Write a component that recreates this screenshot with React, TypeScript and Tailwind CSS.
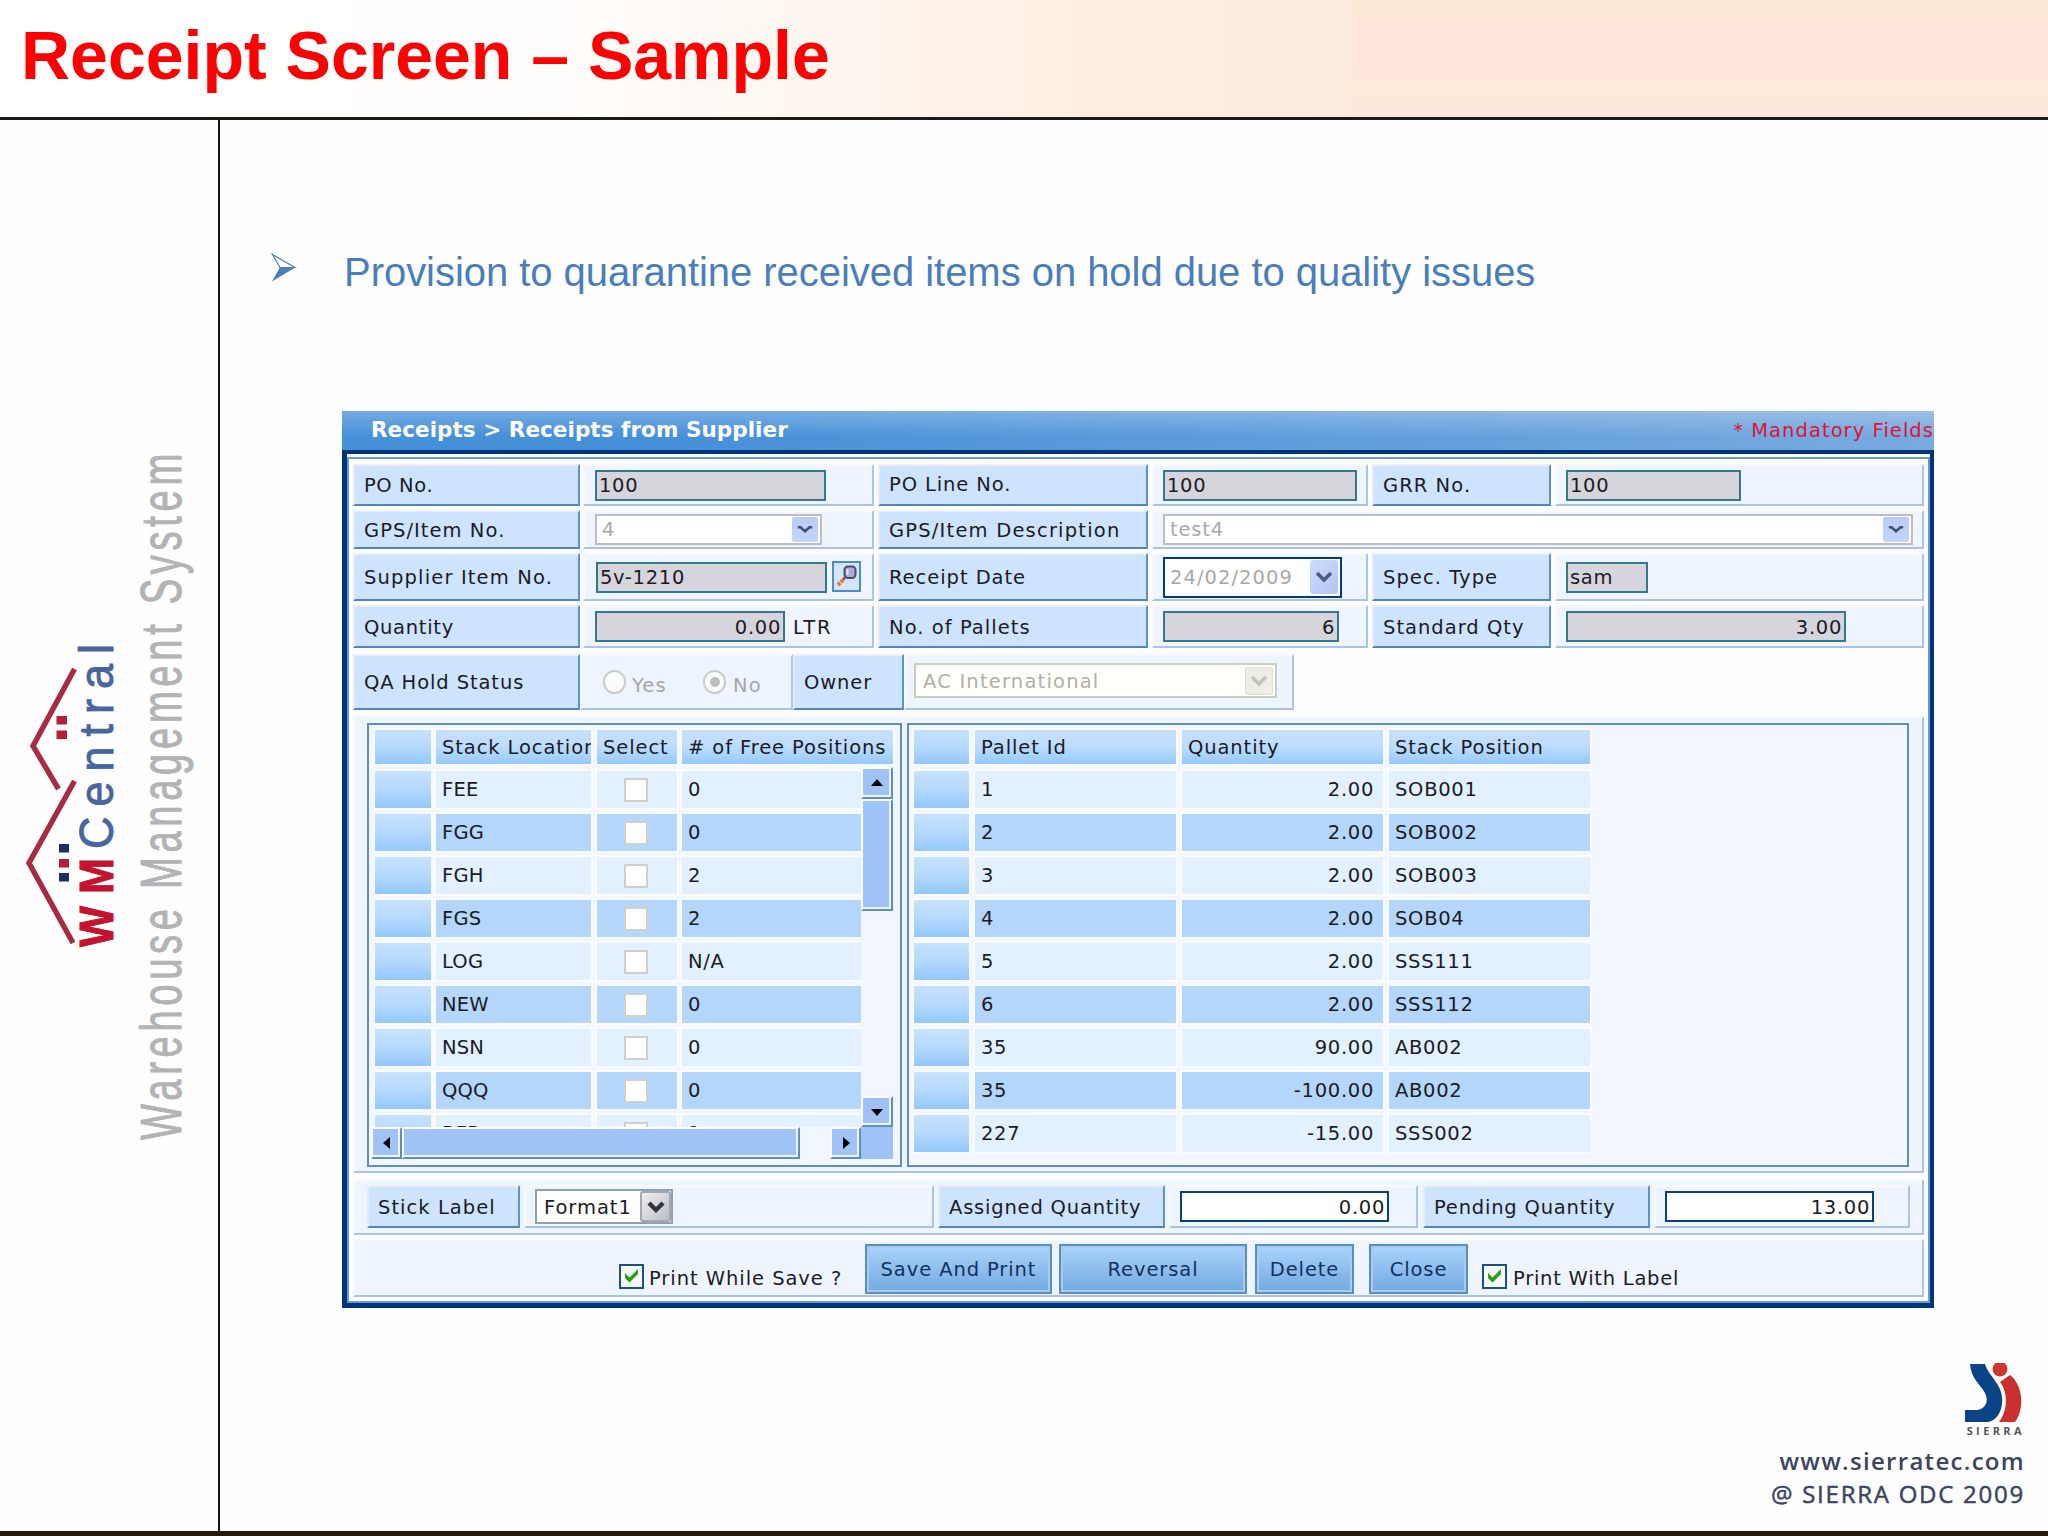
import React from "react";

type Kids = { children?: React.ReactNode; className?: string };

const Label = ({ children, className = "" }: Kids) => (
  <div
    className={`flex shrink-0 items-center border-2 border-t-[#eeeefa] border-l-[#e6ecfa] border-r-[#5f92c6] border-b-[#5485b8] bg-[#cee4fe] pt-[2px] pl-[9px] whitespace-nowrap ${className}`}
  >
    {children}
  </div>
);

const Value = ({ children, className = "" }: Kids) => (
  <div
    className={`flex shrink-0 items-center border-2 border-t-[#f8f9fe] border-l-[#f8f9fe] border-r-[#a9c6e8] border-b-[#a9c3e2] bg-[#eff5ff] whitespace-nowrap ${className}`}
  >
    {children}
  </div>
);

const Input = ({ children, className = "" }: Kids) => (
  <div
    className={`flex h-[31px] shrink-0 items-center border-2 border-[#34788f] bg-[#d6d5db] px-[2px] pt-[2px] leading-none tracking-[0.7px] ${className}`}
  >
    {children}
  </div>
);

const Chevron = ({ color, className = "", w = 3.6 }: { color: string; className?: string; w?: number }) => (
  <svg viewBox="0 0 18 14" className={className} fill="none" stroke={color} strokeWidth={w}>
    <path d="M2 3 L9 10 L16 3" />
  </svg>
);

const SmallArrow = () => (
  <div className="flex h-[25px] w-[26px] items-center justify-center rounded-[2px] bg-gradient-to-b from-[#b9cbf7] to-[#c4d6ff]">
    <svg viewBox="0 0 16 10" className="h-[9px] w-[16px]" fill="none" stroke="#415174" strokeWidth="2.8">
      <path d="M0 2.5 H3 L8 7 L13 2.5 H16" />
    </svg>
  </div>
);

const Check = ({ className = "" }: { className?: string }) => (
  <div className={`flex h-[25px] w-[25px] shrink-0 items-center justify-center border-2 border-[#1d5180] bg-[#f6f8f6] ${className}`}>
    <svg viewBox="0 0 17 16" className="h-[16px] w-[17px]">
      <path d="M2 5 L6.5 9.5 L15 1 V6 L6.5 14.5 L2 10 Z" fill="#22a121" />
    </svg>
  </div>
);

const Radio = ({ on = false }: { on?: boolean }) => (
  <div className="flex h-[24px] w-[23px] items-center justify-center rounded-full border-2 border-[#cbcdc8] bg-[#fafbfd]">
    {on && <div className="h-[10px] w-[10px] rounded-full bg-[#bcbdb9]" />}
  </div>
);

const Magnifier = () => (
  <div className="-mt-[2px] ml-[5px] flex h-[31px] w-[29px] items-center justify-center border-2 border-[#4d8ec2] bg-[#d3e6fc]">
    <svg viewBox="0 0 22 24" className="h-[24px] w-[22px]">
      <path d="M2 21 L8 15" stroke="#e8743c" strokeWidth="4" strokeDasharray="3 1" />
      <path d="M7 16 L10 12" stroke="#a9502c" strokeWidth="2.4" />
      <rect x="8.5" y="2.5" width="11" height="11.5" rx="3.5" fill="#a9aed0" stroke="#4b4c6c" strokeWidth="2" />
      <path d="M11.5 5 V11" stroke="#e3e7f8" strokeWidth="2" />
    </svg>
  </div>
);

const Head = ({ children, className = "" }: Kids) => (
  <div
    className={`h-[34px] shrink-0 overflow-hidden bg-gradient-to-b from-[#c8e0fd] via-[#bcdcfd] to-[#95c9fd] leading-[35px] tracking-[0.9px] whitespace-nowrap ring-2 ring-white/60 ${className}`}
  >
    {children}
  </div>
);

const RowHead = ({ className = "" }: Kids) => (
  <div className={`shrink-0 bg-gradient-to-b from-[#c6e2ff] via-[#b5d9fd] to-[#92c8fd] ring-2 ring-white/60 ${className}`} />
);

const Cell = ({ children, odd, className = "" }: Kids & { odd: boolean }) => (
  <div
    className={`h-[37px] shrink-0 leading-[38px] tracking-[0.7px] whitespace-nowrap ring-2 ring-white/60 ${odd ? "bg-[#b3d6fa]" : "bg-[#e2f0ff]"} ${className}`}
  >
    {children}
  </div>
);

const stacks: [string, string][] = [
  ["FEE", "0"],
  ["FGG", "0"],
  ["FGH", "2"],
  ["FGS", "2"],
  ["LOG", "N/A"],
  ["NEW", "0"],
  ["NSN", "0"],
  ["QQQ", "0"],
  ["RFP", "1"],
];

const pallets: [string, string, string][] = [
  ["1", "2.00", "SOB001"],
  ["2", "2.00", "SOB002"],
  ["3", "2.00", "SOB003"],
  ["4", "2.00", "SOB04"],
  ["5", "2.00", "SSS111"],
  ["6", "2.00", "SSS112"],
  ["35", "90.00", "AB002"],
  ["35", "-100.00", "AB002"],
  ["227", "-15.00", "SSS002"],
];

const barPart =
  "flex shrink-0 items-center justify-center border-2 border-t-white border-l-white border-r-[#5c8fc8] border-b-[#5c8fc8] bg-[#9fc2f7] shadow-[inset_-2px_-2px_0_#eef5ff]";

const Triangle = ({ d }: { d: string }) => (
  <svg viewBox="0 0 12 12" className="h-[12px] w-[12px]">
    <path d={d} fill="#000" />
  </svg>
);

const StackTable = () => (
  <div className="mt-[7px] ml-[14px] h-[444px] w-[535px] shrink-0 border-2 border-[#5c8fc8] bg-[#f1f6ff]">
    <div className="mt-[5px] ml-[6px] flex h-[34px]">
      <RowHead className="h-[34px] w-[56px]" />
      <Head className="ml-[5px] w-[155px] pl-[6px]">Stack Location</Head>
      <Head className="ml-[6px] w-[80px] pl-[6px]">Select</Head>
      <Head className="ml-[5px] w-[211px] pl-[6px]"># of Free Positions</Head>
    </div>
    <div className="flex">
      <div className="ml-[5px] flex h-[363px] w-[487px] shrink-0 flex-col gap-[6px] overflow-hidden pt-[7px] pl-px">
        {stacks.map(([loc, free], i) => (
          <div key={loc} className="flex h-[37px] shrink-0">
            <RowHead className="h-[37px] w-[56px]" />
            <Cell odd={i % 2 === 1} className="ml-[5px] w-[155px] pl-[6px]">
              <span className="tracking-[0.2px]">{loc}</span>
            </Cell>
            <Cell odd={i % 2 === 1} className="ml-[6px] flex w-[80px] items-center justify-center pr-[3px]">
              <div className="mt-px h-[24px] w-[24px] border-2 border-[#cfd1c8] bg-white" />
            </Cell>
            <Cell odd={i % 2 === 1} className="ml-[5px] w-[179px] pl-[6px]">
              {free}
            </Cell>
          </div>
        ))}
      </div>
      <div className="mt-[3px] flex h-[360px] w-[32px] flex-col">
        <div className={`h-[32px] ${barPart}`}>
          <Triangle d="M0 9 L6 2 L12 9 Z" />
        </div>
        <div className={`h-[112px] ${barPart}`} />
        <div className={`mt-auto h-[31px] ${barPart}`}>
          <Triangle d="M0 3 L6 10 L12 3 Z" />
        </div>
      </div>
    </div>
    <div className="ml-[2px] flex h-[32px]">
      <div className={`w-[31px] ${barPart}`}>
        <Triangle d="M9 0 L2 6 L9 12 Z" />
      </div>
      <div className={`w-[398px] ${barPart}`} />
      <div className={`ml-[30px] w-[31px] ${barPart}`}>
        <Triangle d="M3 0 L10 6 L3 12 Z" />
      </div>
      <div className="w-[32px] bg-[#9fc2f7]" />
    </div>
  </div>
);

const PalletTable = () => (
  <div className="mt-[7px] ml-[5px] h-[444px] w-[1002px] shrink-0 border-2 border-[#5c8fc8] bg-[#f1f6ff]">
    <div className="mt-[5px] ml-[5px] flex h-[34px]">
      <RowHead className="h-[34px] w-[55px]" />
      <Head className="ml-[6px] w-[201px] pl-[6px]">Pallet Id</Head>
      <Head className="ml-[6px] w-[201px] pl-[6px]">Quantity</Head>
      <Head className="ml-[6px] w-[201px] pl-[6px]">Stack Position</Head>
    </div>
    <div className="mt-[7px] ml-[5px] flex flex-col gap-[6px]">
      {pallets.map(([id, qty, pos], i) => (
        <div key={i} className="flex h-[37px]">
          <RowHead className="h-[37px] w-[55px]" />
          <Cell odd={i % 2 === 1} className="ml-[6px] w-[201px] pl-[6px]">
            {id}
          </Cell>
          <Cell odd={i % 2 === 1} className="ml-[6px] w-[201px] pr-[9px] text-right">
            {qty}
          </Cell>
          <Cell odd={i % 2 === 1} className="ml-[6px] w-[201px] pl-[6px]">
            {pos}
          </Cell>
        </div>
      ))}
    </div>
  </div>
);

const Button = ({ children, className = "" }: Kids) => (
  <div
    className={`flex h-[50px] shrink-0 items-center justify-center border-2 border-[#5a8fc4] bg-gradient-to-b from-[#abd3fd] to-[#72a9de] pt-[2px] tracking-[0.9px] text-[#14305e] shadow-[inset_0_0_0_2px_#a9cbee] ${className}`}
  >
    {children}
  </div>
);

const Brand = () => (
  <svg viewBox="0 0 218 1416" className="h-[1416px] w-[218px]">
    <g transform="translate(0 -120)">
      <g fill="none" stroke="#a92a43" strokeWidth="5.4">
        <path d="M73 943 L29 863 L74.500 781" />
        <path d="M58.500 789 L33 746 L74.500 669" />
      </g>
      <g fill="#1f2f66">
        <rect x="59" y="844" width="10" height="8.500" />
        <rect x="59" y="873" width="10" height="8.500" />
      </g>
      <g fill="#b51f3a">
        <rect x="59" y="859" width="10" height="8.500" />
        <rect x="56.500" y="716" width="10.500" height="8.500" />
        <rect x="56.500" y="730.500" width="10.500" height="8.500" />
      </g>
      <g fontFamily="Liberation Sans" fontSize="49">
        <text transform="translate(112.500 947) rotate(-90)" fontWeight="bold" fill="#c4122f" stroke="#c4122f" strokeWidth="1">
          <tspan textLength="41" lengthAdjust="spacingAndGlyphs">W</tspan>
        </text>
        <text transform="translate(112.500 894) rotate(-90)" fontWeight="bold" fill="#c4122f" stroke="#c4122f" strokeWidth="1">
          <tspan textLength="36" lengthAdjust="spacingAndGlyphs">M</tspan>
        </text>
        <text transform="translate(112.500 849) rotate(-90) scale(0.92 1)" letterSpacing="10.800" fill="#48659c" stroke="#48659c" strokeWidth="0.9">
          Central
        </text>
        <text
          transform="translate(181 1140) rotate(-90) scale(0.67 1)"
          fontSize="57"
          letterSpacing="6.950"
          fill="#b3b3b5"
          stroke="#b3b3b5"
          strokeWidth="1"
        >
          Warehouse Management System
        </text>
      </g>
    </g>
  </svg>
);

const Footer = () => (
  <div className="flex flex-col items-end pr-[23px] font-['Open_Sans',sans-serif] text-[#3b4560]">
    <svg viewBox="0 0 62 60" className="h-[60px] w-[62px]">
      <path d="M7 1 H22 C24 9 32 16 36 24 C44 40 36 58 25 59 H2 V47 H15 C23 45 26 38 22 30 C18 22 8 16 7 1 Z" fill="#0b4484" />
      <circle cx="37" cy="6" r="7.500" fill="#cd3732" />
      <path d="M37 19 L47 12 C60 22 62 46 52 59 H36 C44 49 46 31 37 19 Z" fill="#c9302f" />
    </svg>
    <div className="mt-[2px] h-[12px] text-[11px] leading-[12px] font-bold tracking-[3.4px] text-[#55565e]">SIERRA</div>
    <div className="mt-[7px] h-[34px] text-[24px] leading-[34px] font-semibold tracking-[1.3px] whitespace-nowrap">www.sierratec.com</div>
    <div className="h-[32px] text-[24px] leading-[31px] tracking-[1.75px] whitespace-nowrap [-webkit-text-stroke:0.5px_#3b4560]">@ SIERRA ODC 2009</div>
  </div>
);

const ReceiptPanel = () => (
  <div className="w-[1592px] font-['DejaVu_Sans',sans-serif] text-[19.500px] tracking-[1.05px] text-[#1b1b26]">
    <div className="flex h-[39px] items-center justify-between bg-[linear-gradient(to_bottom,rgba(255,255,255,0.25),rgba(255,255,255,0)_65%),linear-gradient(to_right,#4690d8,#4690d8_20%,#78aadf)]">
      <div className="ml-[29px] text-[21.500px] font-bold tracking-[0.05px] text-white">Receipts &gt; Receipts from Supplier</div>
      <div className="text-[#dd1438]">* Mandatory Fields</div>
    </div>
    <div className="border-t-4 border-r-4 border-b-[5px] border-l-[5px] border-[#003478] bg-[#fdfdff] pt-[3px]">
      <div className="flex h-[846px] flex-col border-2 border-[#6a9bcd] px-[4px]">
        <div className="mt-[5px] flex h-[42px]">
          <Label className="w-[227px]">
            <span className="tracking-[0.6px]">PO No.</span>
          </Label>
          <Value className="ml-[3px] w-[291px] pl-[10px]">
            <Input className="w-[231px]">100</Input>
          </Value>
          <Label className="ml-[4px] w-[270px]">
            <span className="-mt-[3px] tracking-[0.9px]">PO Line No.</span>
          </Label>
          <Value className="ml-[4px] w-[216px] pl-[9px]">
            <Input className="w-[194px]">100</Input>
          </Value>
          <Label className="ml-[4px] w-[179px]">GRR No.</Label>
          <Value className="ml-[4px] w-[369px] pl-[9px]">
            <Input className="w-[175px]">100</Input>
          </Value>
        </div>

        <div className="mt-[4px] flex h-[39px]">
          <Label className="w-[227px]">GPS/Item No.</Label>
          <Value className="ml-[3px] w-[291px] pl-[10px]">
            <div className="flex h-[31px] w-[227px] items-center justify-between border-2 border-[#bdbdc1] bg-white pr-[2px] pl-[5px] text-[#a9a8a8]">
              <span className="mt-px">4</span>
              <SmallArrow />
            </div>
          </Value>
          <Label className="ml-[4px] w-[270px]">
            <span className="tracking-[1.2px]">GPS/Item Description</span>
          </Label>
          <Value className="ml-[4px] w-[772px] pl-[9px]">
            <div className="flex h-[31px] w-[750px] items-center justify-between border-2 border-[#bdbdc1] bg-white pr-[2px] pl-[5px] text-[#a9a8a8]">
              <span className="mt-px tracking-[0.8px]">test4</span>
              <SmallArrow />
            </div>
          </Value>
        </div>

        <div className="mt-[4px] flex h-[48px]">
          <Label className="w-[227px]">
            <span className="tracking-[1.15px]">Supplier Item No.</span>
          </Label>
          <Value className="ml-[3px] w-[291px] pl-[11px]">
            <Input className="w-[231px]">5v-1210</Input>
            <Magnifier />
          </Value>
          <Label className="ml-[4px] w-[270px]">
            <span className="tracking-[0.95px]">Receipt Date</span>
          </Label>
          <Value className="ml-[4px] w-[216px] pl-[9px]">
            <div className="flex h-[41px] w-[179px] items-center justify-between border-2 border-[#003b82] bg-white pr-[2px] pl-[5px] text-[#a9a8a8]">
              <span className="mt-[2px]">24/02/2009</span>
              <div className="flex h-[34px] w-[28px] items-center justify-center rounded-[3px] bg-gradient-to-br from-[#cfdcfb] to-[#b0c5f5]">
                <Chevron color="#4a5b86" className="h-[14px] w-[18px]" />
              </div>
            </div>
          </Value>
          <Label className="ml-[4px] w-[179px]">Spec. Type</Label>
          <Value className="ml-[4px] w-[369px] pl-[9px]">
            <Input className="w-[82px]">sam</Input>
          </Value>
        </div>

        <div className="mt-[4px] flex h-[43px]">
          <Label className="w-[227px]">
            <span className="tracking-[0.7px]">Quantity</span>
          </Label>
          <Value className="ml-[3px] w-[291px] pl-[10px]">
            <Input className="w-[190px] justify-end">0.00</Input>
            <span className="mt-[2px] ml-[8px] tracking-[2px]">LTR</span>
          </Value>
          <Label className="ml-[4px] w-[270px]">No. of Pallets</Label>
          <Value className="ml-[4px] w-[216px] pl-[9px]">
            <Input className="w-[176px] justify-end">6</Input>
          </Value>
          <Label className="ml-[4px] w-[179px]">
            <span className="tracking-[1px]">Standard Qty</span>
          </Label>
          <Value className="ml-[4px] w-[369px] pl-[9px]">
            <Input className="w-[280px] justify-end">3.00</Input>
          </Value>
        </div>

        <div className="mt-[6px] flex h-[56px]">
          <Label className="w-[227px]">
            <span className="tracking-[0.9px]">QA Hold Status</span>
          </Label>
          <Value className="w-[213px] pl-[21px] text-[#a6a6a6]">
            <Radio />
            <span className="mt-[7px] ml-[6px] w-[65px]">Yes</span>
            <span className="ml-[6px]">
              <Radio on />
            </span>
            <span className="mt-[7px] ml-[7px]">No</span>
          </Value>
          <Label className="w-[111px]">
            <span className="tracking-[0.9px]">Owner</span>
          </Label>
          <Value className="w-[390px] pl-[8px]">
            <div className="-mt-[3px] flex h-[35px] w-[363px] items-center justify-between border-2 border-[#cbcfbf] bg-[#fffffb] pr-[2px] pl-[7px] text-[#b0b0a8]">
              <span className="mt-[2px] tracking-[1.2px]">AC International</span>
              <div className="flex h-[28px] w-[28px] items-center justify-center rounded-[2px] border border-[#dedfd5] bg-[#eeeee6]">
                <Chevron color="#c3c4b9" className="h-[14px] w-[18px]" />
              </div>
            </div>
          </Value>
        </div>

        <div className="mt-[6px] h-[457px] w-[1571px] shrink-0 border-2 border-t-[#f8f9fe] border-r-[#a9c6e8] border-b-[#a9c3e2] border-l-[#f8f9fe] bg-[#eff5ff]">
          <div className="-mt-[2px] -ml-[2px] flex">
            <StackTable />
            <PalletTable />
          </div>
        </div>

        <Value className="mt-[6px] h-[56px] w-[1571px]">
          <div className="-mt-[1px] ml-[12px] flex h-[43px]">
            <Label className="w-[153px]">Stick Label</Label>
            <Value className="ml-[4px] w-[410px] pl-[9px]">
              <div className="flex h-[35px] w-[138px] items-center justify-between border-2 border-[#8fa2b4] bg-white pl-[7px]">
                <span className="mt-[2px] tracking-[0.95px]">Format1</span>
                <div className="flex h-[31px] w-[31px] items-center justify-center rounded-[3px] border-2 border-[#a5a7ae] bg-gradient-to-br from-[#efeff1] to-[#bdbec5]">
                  <Chevron color="#333338" w={4.4} className="h-[14px] w-[18px]" />
                </div>
              </div>
            </Value>
            <Label className="ml-[4px] w-[227px]">
              <span className="tracking-[0.8px]">Assigned Quantity</span>
            </Label>
            <Value className="ml-[4px] w-[249px] pl-[9px]">
              <Input className="w-[209px] justify-end !border-[#0a3f80] !bg-white">0.00</Input>
            </Value>
            <Label className="ml-[5px] w-[227px]">
              <span className="tracking-[0.8px]">Pending Quantity</span>
            </Label>
            <Value className="ml-[4px] w-[256px] pl-[9px]">
              <Input className="w-[209px] justify-end !border-[#0a3f80] !bg-white">13.00</Input>
            </Value>
          </div>
        </Value>

        <Value className="mt-[4px] h-[58px] w-[1571px]">
          <Check className="mt-[16px] ml-[264px]" />
          <span className="mt-[21px] ml-[5px] w-[200px] tracking-[0.95px]">Print While Save ?</span>
          <div className="mt-[2px] ml-[16px] flex">
            <Button className="w-[187px]">Save And Print</Button>
            <Button className="ml-[7px] w-[188px]">Reversal</Button>
            <Button className="ml-[8px] w-[99px]">Delete</Button>
            <Button className="ml-[15px] w-[99px]">Close</Button>
          </div>
          <Check className="mt-[16px] ml-[14px]" />
          <span className="mt-[21px] ml-[6px] tracking-[0.75px]">Print With Label</span>
        </Value>
      </div>
    </div>
  </div>
);

export default function App() {
  return (
    <div className="flex h-[1536px] w-[2048px] flex-col overflow-hidden bg-[#fefefe]">
      <header className="flex h-[117px] shrink-0 items-center justify-between bg-[linear-gradient(to_right,#ffffff_0%,#fffefd_25%,#fef5ee_42%,#fdede0_55%,#fcebdc_66%)] pl-[21px]">
        <h1 className="-mt-[7px] font-['Liberation_Sans',Arial,sans-serif] text-[68px] font-bold whitespace-nowrap text-[#ff0000]">
          Receipt Screen – Sample
        </h1>
        <div className="h-full w-[696px] bg-[linear-gradient(to_bottom,#fee9d7_0,#fee9d7_15px,#fee6db_17px,#fee6db_76px,#fee9d9_80px,#fce8db_117px)]" />
      </header>
      <div className="h-[3px] shrink-0 bg-[#1c1a12]" />
      <div className="flex h-[1411px] shrink-0">
        <aside className="w-[218px] shrink-0 overflow-hidden">
          <Brand />
        </aside>
        <div className="w-[2px] shrink-0 bg-[#151515]" />
        <main className="flex flex-1 flex-col">
          <div className="mt-[127px] ml-[51px] flex h-[50px] items-center">
            <svg viewBox="0 0 26 29" className="-mt-[9px] h-[29px] w-[26px]">
              <path d="M1.500 1.500 L24 14.500 H9 Z" fill="none" stroke="#4a7ebb" strokeWidth="1.200" />
              <path d="M9 14 H25 L1 28.500 Z" fill="#4a7ebb" />
            </svg>
            <p className="ml-[47px] font-['Liberation_Sans',Arial,sans-serif] text-[40px] leading-[50px] tracking-[-0.04px] whitespace-nowrap text-[#4a7ebb]">
              Provision to quarantine received items on hold due to quality issues
            </p>
          </div>
          <div className="mt-[114px] ml-[122px]">
            <ReceiptPanel />
          </div>
          <div className="mt-[55px]">
            <Footer />
          </div>
        </main>
      </div>
      <div className="h-[5px] shrink-0 bg-[#261a08]" />
    </div>
  );
}
